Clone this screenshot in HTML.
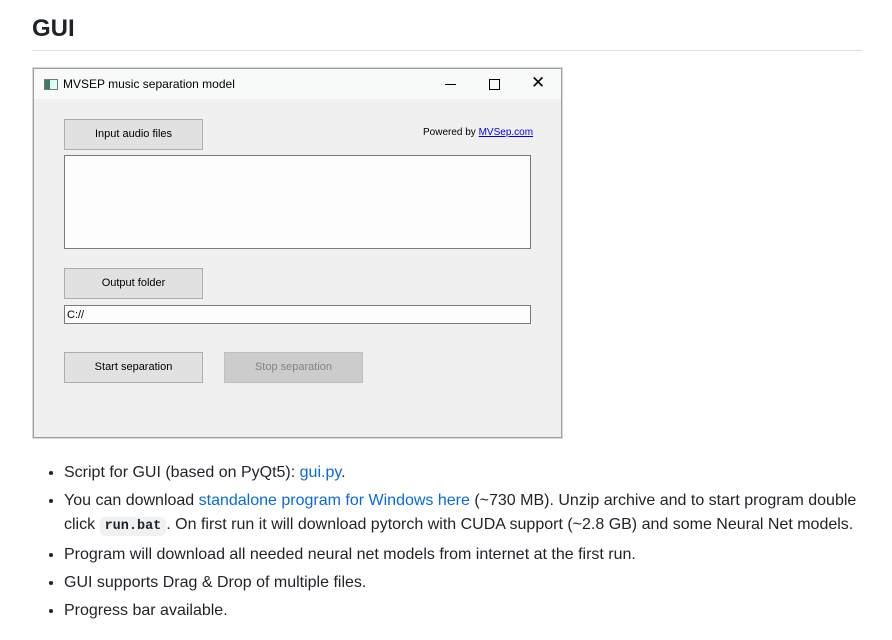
<!DOCTYPE html>
<html><head><style>
body{margin:0;background:#fff;font-family:"Liberation Sans",sans-serif;color:#1f2328;width:892px;height:640px;overflow:hidden;position:relative}
.a{position:absolute}
h2{position:absolute;left:32px;top:15px;margin:0;font-size:24px;font-weight:600}
.hr{left:32px;top:50px;width:830px;height:1px;background:#d8dee4}
.win{left:33px;top:68px;width:527px;height:368px;background:#f0f0f0;border:1px solid #a0a0a0;box-shadow:0 0 0 1px #d8d8d8}
.tb{left:0;top:0;width:527px;height:30px;background:#f8faf9}
.btn{background:#e1e1e1;border:1px solid #adadad;font-size:11px;text-align:center;line-height:29px;color:#000}
.box{background:#fcfdfc;border:1px solid #7a7a7a}
ul{position:absolute;left:32px;top:461px;width:798px;margin:0;padding-left:32px;font-size:16px;line-height:24px}
li{margin-bottom:4px}
a{color:#0969da;text-decoration:none}
code{font-family:"Liberation Mono",monospace;font-size:13.5px;background:#eff1f3;padding:2px 5px;border-radius:5px;font-weight:600}
</style></head><body>
<h2>GUI</h2>
<div class="a hr"></div>
<div class="a win">
 <div class="a tb">
  <div class="a" style="left:10px;top:10px;width:12px;height:9px;border:1px solid #777;background:linear-gradient(90deg,#3a7a6a 40%,#dfe 40%)"></div>
  <div class="a" style="left:29px;top:8px;font-size:12px;color:#000">MVSEP music separation model</div>
  <div class="a" style="left:411px;top:15px;width:11px;height:1px;background:#000"></div>
  <div class="a" style="left:455px;top:10px;width:9px;height:9px;border:1px solid #000"></div>
  <div class="a" style="left:497px;top:4px;font-size:17px;color:#000">✕</div>
 </div>
 <div class="a btn" style="left:30px;top:50px;width:137px;height:29px">Input audio files</div>
 <div class="a" style="left:389px;top:58px;font-size:10px;color:#000">Powered by <span style="color:#0000ee;text-decoration:underline">MVSep.com</span></div>
 <div class="a box" style="left:30px;top:86px;width:465px;height:92px"></div>
 <div class="a btn" style="left:30px;top:199px;width:137px;height:29px">Output folder</div>
 <div class="a box" style="left:30px;top:236px;width:463px;height:17px;font-size:11px;line-height:18px;color:#000;padding-left:2px">C://</div>
 <div class="a btn" style="left:30px;top:283px;width:137px;height:29px">Start separation</div>
 <div class="a btn" style="left:190px;top:283px;width:137px;height:29px;background:#ccc;border-color:#bfbfbf;color:#838383">Stop separation</div>
</div>
<ul>
<li>Script for GUI (based on PyQt5): <a>gui.py</a>.</li>
<li>You can download <a>standalone program for Windows here</a> (~730 MB). Unzip archive and to start program double click <code>run.bat</code>. On first run it will download pytorch with CUDA support (~2.8 GB) and some Neural Net models.</li>
<li>Program will download all needed neural net models from internet at the first run.</li>
<li>GUI supports Drag &amp; Drop of multiple files.</li>
<li>Progress bar available.</li>
</ul>
</body></html>
